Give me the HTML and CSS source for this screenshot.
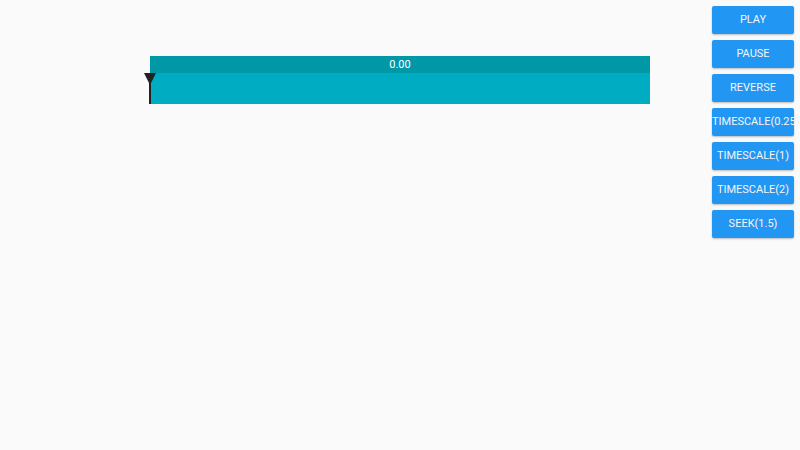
FILE: index.html
```html
<!DOCTYPE html>
<html>
<head>
<meta charset="utf-8">
<link rel="stylesheet" href="styles.css">
</head>
<body>
<div class="page">
  <main class="stage">
    <div class="timeline">
      <div class="timeline-head">0.00</div>
      <div class="timeline-body">
        <div class="playhead"></div>
      </div>
    </div>
  </main>
  <aside class="controls">
    <button class="btn">PLAY</button>
    <button class="btn">PAUSE</button>
    <button class="btn">REVERSE</button>
    <button class="btn">TIMESCALE(0.25)</button>
    <button class="btn">TIMESCALE(1)</button>
    <button class="btn">TIMESCALE(2)</button>
    <button class="btn">SEEK(1.5)</button>
  </aside>
</div>
</body>
</html>
```
FILE: styles.css
```css
html, body {
  margin: 0;
  padding: 0;
  background: #fafafa;
  font-family: Roboto, "Liberation Sans", sans-serif;
}
.page {
  display: flex;
  width: 800px;
  height: 450px;
}
.stage {
  flex: 1;
  padding: 56px 0 0 150px;
}
.timeline {
  width: 500px;
}
.timeline-head {
  height: 17px;
  background: #0097a7;
  color: #fff;
  font-size: 11px;
  line-height: 17px;
  text-align: center;
}
.timeline-body {
  position: relative;
  height: 31px;
  background: #00acc1;
}
.playhead {
  position: absolute;
  left: -1px;
  top: 0;
  width: 2px;
  height: 31px;
  background: #222;
}
.playhead::before {
  content: "";
  position: absolute;
  left: -5px;
  top: 0;
  border-left: 6px solid transparent;
  border-right: 6px solid transparent;
  border-top: 12px solid #222;
}
.controls {
  display: flex;
  flex-direction: column;
  gap: 6px;
  padding: 6px 6px 0 0;
  width: 82px;
}
.btn {
  display: block;
  width: 82px;
  height: 28px;
  padding: 0;
  border: none;
  border-radius: 2px;
  background: #2196f3;
  color: #f5f5f5;
  font-family: Roboto, "Liberation Sans", sans-serif;
  font-size: 11px;
  line-height: 28px;
  text-align: center;
  white-space: nowrap;
  overflow: visible;
  box-shadow: 0 1px 2px rgba(0,0,0,0.25);
}
```
